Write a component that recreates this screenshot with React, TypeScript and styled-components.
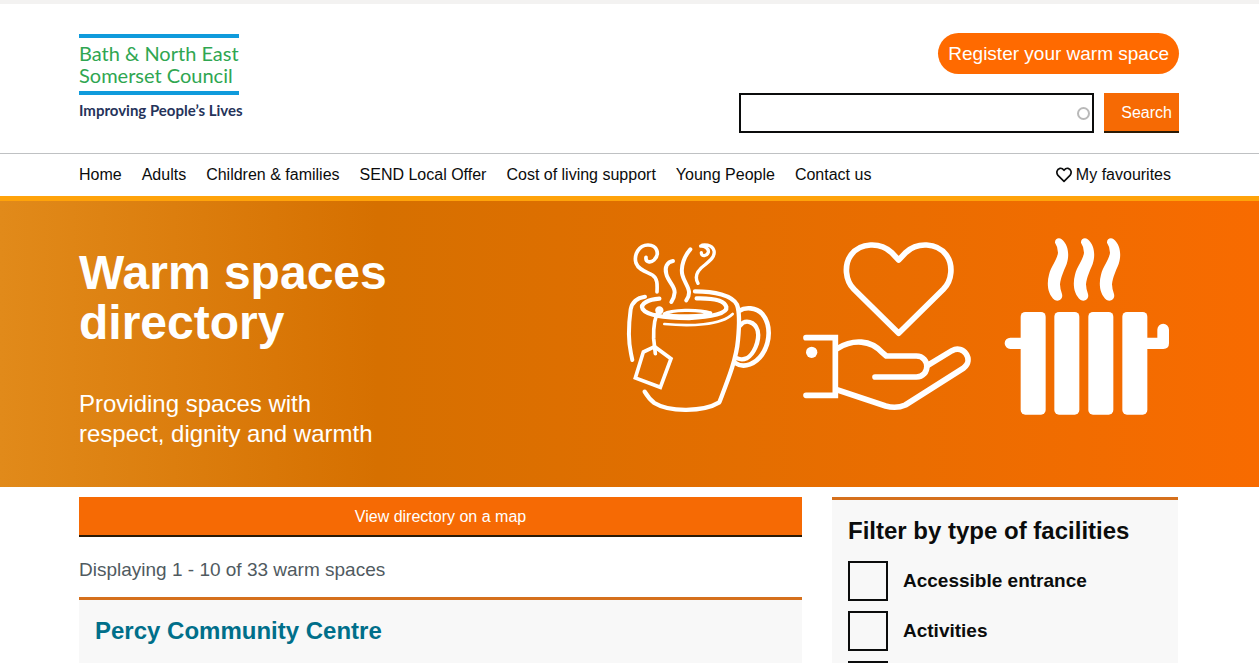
import React from "react";
import styled, { createGlobalStyle } from "styled-components";

const GlobalStyle = createGlobalStyle`
  * { box-sizing: border-box; }
  body {
    margin: 0;
    background: #fff;
    color: #0b0c0c;
    font-family: Arial, "Liberation Sans", sans-serif;
    font-size: 16px;
    line-height: 24px;
  }
  a { color: inherit; text-decoration: none; }
  h1, h2, p, ul { margin: 0; padding: 0; }
`;

const Page = styled.div`
  height: 100vh;
  overflow: hidden;
  border-top: 4px solid #f3f2f1;
`;

const Container = styled.div`
  width: calc(100% - 32px);
  max-width: 1101px;
  margin: 0 auto;
`;

const HeaderRow = styled(Container)`
  display: flex;
  justify-content: space-between;
  align-items: flex-start;
  padding: 29px 1px 20px 0;
`;

const Logo = styled.a`
  display: block;
  margin-top: 1px;
  width: 160px;
  font-family: Lato, "Open Sans", sans-serif;
  white-space: nowrap;
`;

const LogoName = styled.span`
  display: block;
  padding: 4px 0 5px;
  border-top: 4px solid #0f9bdc;
  border-bottom: 4px solid #0f9bdc;
  color: #2fa651;
  font-size: 20px;
  line-height: 22px;
`;

const LogoTagline = styled.span`
  display: block;
  margin-top: 5px;
  color: #25335a;
  font-size: 15px;
  font-weight: 700;
  line-height: 20px;
`;

const HeaderTools = styled.div`
  display: flex;
  flex-direction: column;
  align-items: flex-end;
  gap: 19px;
`;

const RegisterLink = styled.a`
  padding: 0 10px;
  border-radius: 21px;
  background: #ff6a00;
  color: #fff;
  font-size: 19px;
  line-height: 41px;
`;

const SearchForm = styled.form`
  display: flex;
  gap: 10px;
`;

const SearchField = styled.label`
  position: relative;
  display: block;
  width: 355px;
`;

const SearchInput = styled.input`
  display: block;
  width: 100%;
  height: 40px;
  padding: 0 28px 0 8px;
  border: 2px solid #0b0c0c;
  border-radius: 0;
  background: #fff;
  font: inherit;
`;

const Throbber = styled.span`
  position: absolute;
  top: 14px;
  right: 4px;
  width: 13px;
  height: 13px;
  border: 2px solid #b9b9b9;
  border-radius: 50%;
`;

const SearchButton = styled.button`
  height: 40px;
  padding: 2px 7px 0 17px;
  border: 0;
  border-bottom: 2px solid #2a1a05;
  background: #f66a04;
  color: #fff;
  font: inherit;
`;

const Nav = styled.nav`
  border-top: 1px solid #bfc1c3;
  border-bottom: 5px solid #ffa30a;
`;

const NavRow = styled(Container)`
  display: flex;
  justify-content: space-between;
  padding: 9px 9px 9px 0;
`;

const NavList = styled.ul`
  display: flex;
  gap: 20px;
  list-style: none;
`;

const Favourites = styled.a`
  display: flex;
  align-items: center;
  gap: 4px;
`;

const Hero = styled.section`
  background: linear-gradient(90deg, #e18a1a 0%, #d67000 30%, #f86b00 100%);
  color: #fff;
`;

const HeroRow = styled(Container)`
  display: flex;
  justify-content: space-between;
  align-items: flex-start;
  padding: 24px 1px 38px 0;
`;

const HeroText = styled.div`
  width: 340px;
  padding-top: 23px;
`;

const HeroTitle = styled.h1`
  font-size: 48px;
  line-height: 50px;
`;

const HeroLead = styled.p`
  width: 300px;
  margin-top: 41px;
  font-size: 24px;
  line-height: 30px;
`;

const HeroArt = styled.div`
  display: flex;
`;

const Drawing = styled.svg`
  display: block;
  fill: none;
  stroke: #fff;
  stroke-linecap: round;
  stroke-linejoin: round;
`;

const Content = styled(Container)`
  display: grid;
  grid-template-columns: 723fr 346fr;
  align-items: start;
  gap: 30px;
  padding: 10px 2px 0 0;
`;

const MapLink = styled.a`
  display: block;
  padding: 8px 0 6px;
  border-bottom: 2px solid #2a1a05;
  background: #f66a04;
  color: #fff;
  text-align: center;
`;

const ResultCount = styled.p`
  padding: 20px 0 15px;
  color: #505a5f;
  font-size: 19px;
  line-height: 25px;
`;

const Panel = styled.section`
  padding: 16px 16px 40px;
  border-top: 3px solid #d5701c;
  background: #f8f8f8;
`;

const PanelTitle = styled.h2<{ $link?: boolean }>`
  color: ${(p) => (p.$link ? "#006f8a" : "#0b0c0c")};
  font-size: 24px;
  line-height: 30px;
`;

const Filters = styled.div`
  display: flex;
  flex-direction: column;
  gap: 10px;
  margin-top: 15px;
`;

const FilterLabel = styled.label`
  display: flex;
  align-items: center;
  gap: 15px;
  font-size: 19px;
  font-weight: 700;
`;

const Checkbox = styled.input`
  appearance: none;
  width: 40px;
  height: 40px;
  margin: 0;
  border: 2px solid #0b0c0c;
  &:checked { background: #0b0c0c; }
`;

const navItems = [
  "Home",
  "Adults",
  "Children & families",
  "SEND Local Offer",
  "Cost of living support",
  "Young People",
  "Contact us",
];

const facilities = ["Accessible entrance", "Activities"];

const MugDrawing = () => (
  <Drawing width="180" height="200" viewBox="0 -15 540 600" strokeWidth="13" aria-hidden="true">
    <path d="M108 82C106 97 122 99 132 90C150 73 142 45 114 45C86 45 71 75 78 99C86 121 111 126 127 135C143 145 142 164 141 186" strokeWidth="11" />
    <path d="M189 93C171 96 163 112 169 132C174 154 195 168 194 187Q193 202 184 216" strokeWidth="12" />
    <path d="M241 58C224 77 211 109 217 134C222 156 238 172 237 188Q237 201 229 211" strokeWidth="12" />
    <path d="M274 68C274 81 291 79 295 67C297 56 284 47 272 48C280 42 306 43 312 62C316 80 299 93 284 105C265 119 251 137 264 160" strokeWidth="10" />
    <path d="M105 200C84 203 67 212 62 238C56 282 54 331 63 371L67 390" strokeWidth="12" />
    <path d="M255 184C313 184 367 196 381 224C390 248 388 288 384 330C379 390 351 457 328 517C280 546 178 547 133 519Q117 507 104 485" />
    <path d="M148 206C116 208 89 221 98 237C113 259 184 264 237 264C305 261 353 250 349 231C344 210 303 204 260 205" />
    <path d="M163 252C182 239 264 237 302 249M163 252C190 260 281 261 302 249" strokeWidth="10" />
    <path d="M163 282C238 289 333 287 368 252" strokeWidth="8" />
    <path d="M388 242C405 231 438 231 457 252C482 282 483 334 456 374C438 400 403 417 378 400" strokeWidth="14" />
    <path d="M390 287C405 266 435 274 443 302C450 335 430 374 410 385Q396 391 381 385" strokeWidth="13" />
    <path d="M147 241C134 259 130 292 131 326L136 371" strokeWidth="11" />
    <circle cx="148" cy="241" r="6" />
    <path d="M100 366L134 350L183 386L151 472L76 444Z" strokeWidth="11" strokeLinejoin="miter" />
  </Drawing>
);

const HandDrawing = () => (
  <Drawing width="200" height="200" viewBox="0 -15 600 600" strokeWidth="17" aria-hidden="true">
    <path d="M326 310L192 178C165 150 162 105 183 75C211 37 271 36 304 67L326 90L348 67C381 36 440 37 469 75C490 105 487 150 460 178Z" />
    <path d="M48 323H136V496H48" strokeLinejoin="miter" />
    <circle cx="65" cy="367" r="17" fill="#fff" stroke="none" />
    <path d="M143 355C189 327 242 329 277 368L289 378H379C421 378 421 441 379 441H255" />
    <path d="M415 405L486 362C520 343 553 389 521 414L346 525Q319 537 287 528L143 480" />
  </Drawing>
);

const RadiatorDrawing = () => (
  <Drawing width="189" height="200" viewBox="0 0 567 600" aria-hidden="true">
    <g fill="#fff" stroke="none">
      {[0, 78, 156].map((x) => (
        <path
          key={x}
          transform={`translate(${x} 0)`}
          d="M195 53C194 41 207 36 215 43C237 61 238 94 230 117C220 141 212 158 210 178Q210 190 216 207C220 222 207 231 194 225C172 207 170 175 177 149C183 124 201 106 204 83Q204 66 195 53Z"
        />
      ))}
      {[92, 193, 295, 397].map((x) => (
        <rect key={x} x={x} y="261" width="75" height="308" rx="14" />
      ))}
      <path d="M94 338H61A17 17 0 0 0 61 372H94ZM470 338H502V314A17 17 0 0 1 537 314V355Q537 372 520 372H470Z" />
    </g>
  </Drawing>
);

export default function App() {
  return (
    <Page>
      <GlobalStyle />
      <header>
        <HeaderRow>
          <Logo href="#">
            <LogoName>
              Bath &amp; North East
              <br />
              Somerset Council
            </LogoName>
            <LogoTagline>Improving People’s Lives</LogoTagline>
          </Logo>
          <HeaderTools>
            <RegisterLink href="#">Register your warm space</RegisterLink>
            <SearchForm role="search" onSubmit={(e) => e.preventDefault()}>
              <SearchField>
                <SearchInput type="text" aria-label="Search" />
                <Throbber />
              </SearchField>
              <SearchButton type="submit">Search</SearchButton>
            </SearchForm>
          </HeaderTools>
        </HeaderRow>
        <Nav>
          <NavRow>
            <NavList>
              {navItems.map((item) => (
                <li key={item}>
                  <a href="#">{item}</a>
                </li>
              ))}
            </NavList>
            <Favourites href="#">
              <Drawing width="16" height="16" viewBox="0 0 48 48" aria-hidden="true">
                <path
                  d="M24 43L6 25C0 18 2 6 12 4C17 3 21 6 24 10C27 6 31 3 36 4C46 6 48 18 42 25Z"
                  stroke="#0b0c0c"
                  strokeWidth="5"
                />
              </Drawing>
              My favourites
            </Favourites>
          </NavRow>
        </Nav>
      </header>
      <main>
        <Hero>
          <HeroRow>
            <HeroText>
              <HeroTitle>Warm spaces directory</HeroTitle>
              <HeroLead>Providing spaces with respect, dignity and warmth</HeroLead>
            </HeroText>
            <HeroArt>
              <MugDrawing />
              <HandDrawing />
              <RadiatorDrawing />
            </HeroArt>
          </HeroRow>
        </Hero>
        <Content>
          <div>
            <MapLink href="#">View directory on a map</MapLink>
            <ResultCount>Displaying 1 - 10 of 33 warm spaces</ResultCount>
            <Panel>
              <PanelTitle $link>
                <a href="#">Percy Community Centre</a>
              </PanelTitle>
            </Panel>
          </div>
          <Panel as="aside">
            <PanelTitle>Filter by type of facilities</PanelTitle>
            <Filters>
              {facilities.map((name) => (
                <FilterLabel key={name}>
                  <Checkbox type="checkbox" />
                  {name}
                </FilterLabel>
              ))}
              <Checkbox type="checkbox" aria-label="Other facilities" />
            </Filters>
          </Panel>
        </Content>
      </main>
    </Page>
  );
}
